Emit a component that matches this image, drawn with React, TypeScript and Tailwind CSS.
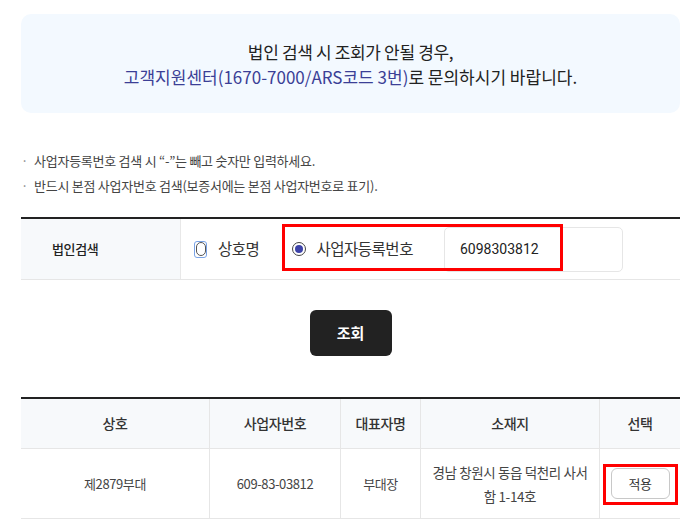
export default function App() {
  return (
    <div className="w-[684px] min-h-[528px] bg-white pl-[21px] pr-[4px] pt-[14px] font-['Noto_Sans_CJK_KR',sans-serif] text-[#333]">
      {/* notice box */}
      <div className="flex h-[99px] flex-col items-center justify-center rounded-[10px] bg-[#f3f9ff] text-[17px] leading-[25px] tracking-normal text-[#222]">
        <p className="tracking-[-0.02em]">법인 검색 시 조회가 안될 경우,</p>
        <p>
          <span className="text-[#3b3f96]">고객지원센터(1670-7000/ARS코드 3번)</span>로 문의하시기 바랍니다.
        </p>
      </div>

      {/* notes */}
      <ul className="mt-[35px] text-[13px] leading-[25px] tracking-[-0.02em] text-[#444]">
        <li className="flex gap-[6px]">
          <span className="text-[#888]">·</span>
          사업자등록번호 검색 시 “-”는 빼고 숫자만 입력하세요.
        </li>
        <li className="flex gap-[6px]">
          <span className="text-[#888]">·</span>
          반드시 본점 사업자번호 검색(보증서에는 본점 사업자번호로 표기).
        </li>
      </ul>

      {/* search row */}
      <div className="relative mt-[19px] flex h-[63px] border-t-2 border-b border-t-[#222] border-b-[#e6e6e6]">
        <div className="flex w-[160px] items-center border-r border-[#e8e8e8] bg-[#f7f9fb] pl-[31px] text-[13px] font-medium tracking-[-0.03em] text-[#222]">
          법인검색
        </div>
        <div className="flex flex-1 items-center pl-[13px] text-[15.5px] tracking-[-0.03em] text-[#333]">
          <label className="flex items-center gap-[11px]">
            <span className="flex h-[17px] w-[13px] items-center justify-center rounded-[3px] border-[1.5px] border-[#7aa3e6]">
              <span className="h-[14px] w-[10px] rounded-full border border-[#555]" />
            </span>
            상호명
          </label>
          <label className="ml-[33px] flex items-center gap-[10px]">
            <span className="flex h-[14px] w-[14px] items-center justify-center rounded-full border border-[#444]">
              <span className="h-[8px] w-[8px] rounded-full bg-[#3c42a8]" />
            </span>
            사업자등록번호
          </label>
          <div className="ml-[31px] flex h-[45px] w-[179px] items-center rounded-[5px] border border-[#e6e6e6] pl-[15px] font-['Roboto',sans-serif] text-[14px] tracking-normal text-[#222]">
            6098303812
          </div>
        </div>
        <div className="pointer-events-none absolute left-[261px] top-[5px] h-[47px] w-[281px] border-[3px] border-[#ff0000]" />
      </div>

      {/* search button */}
      <div className="mt-[30px] flex justify-center">
        <button className="h-[46px] w-[82px] rounded-[6px] bg-[#222] text-[15px] font-bold text-white">
          조회
        </button>
      </div>

      {/* result table */}
      <div className="mt-[41px] border-t-2 border-[#222] text-[13px] tracking-[-0.03em]">
        <div className="grid h-[50px] grid-cols-[189px_131px_80px_179px_80px] border-b border-[#e6e6e6] bg-[#f7f9fb] text-[14px] font-medium text-[#333]">
          <div className="flex items-center justify-center border-r border-[#e6e6e6]">상호</div>
          <div className="flex items-center justify-center border-r border-[#e6e6e6]">사업자번호</div>
          <div className="flex items-center justify-center border-r border-[#e6e6e6]">대표자명</div>
          <div className="flex items-center justify-center border-r border-[#e6e6e6]">소재지</div>
          <div className="flex items-center justify-center">선택</div>
        </div>
        <div className="grid h-[70px] grid-cols-[189px_131px_80px_179px_80px] border-b border-[#e6e6e6] text-[#444]">
          <div className="flex items-center justify-center border-r border-[#e6e6e6]">제2879부대</div>
          <div className="flex items-center justify-center border-r border-[#e6e6e6]">609-83-03812</div>
          <div className="flex items-center justify-center border-r border-[#e6e6e6]">부대장</div>
          <div className="flex items-center justify-center border-r border-[#e6e6e6] px-[6px] text-center text-[13.5px] leading-[24px]">
            경남 창원시 동읍 덕천리 사서
            <br />
            함 1-14호
          </div>
          <div className="relative flex items-center justify-center">
            <button className="h-[31px] w-[59px] rounded-[6px] border border-[#c8c8c8] bg-white text-[13px] text-[#333]">
              적용
            </button>
            <div className="pointer-events-none absolute left-[3px] top-[15px] h-[41px] w-[75px] border-[3px] border-[#ff0000]" />
          </div>
        </div>
      </div>
    </div>
  );
}
